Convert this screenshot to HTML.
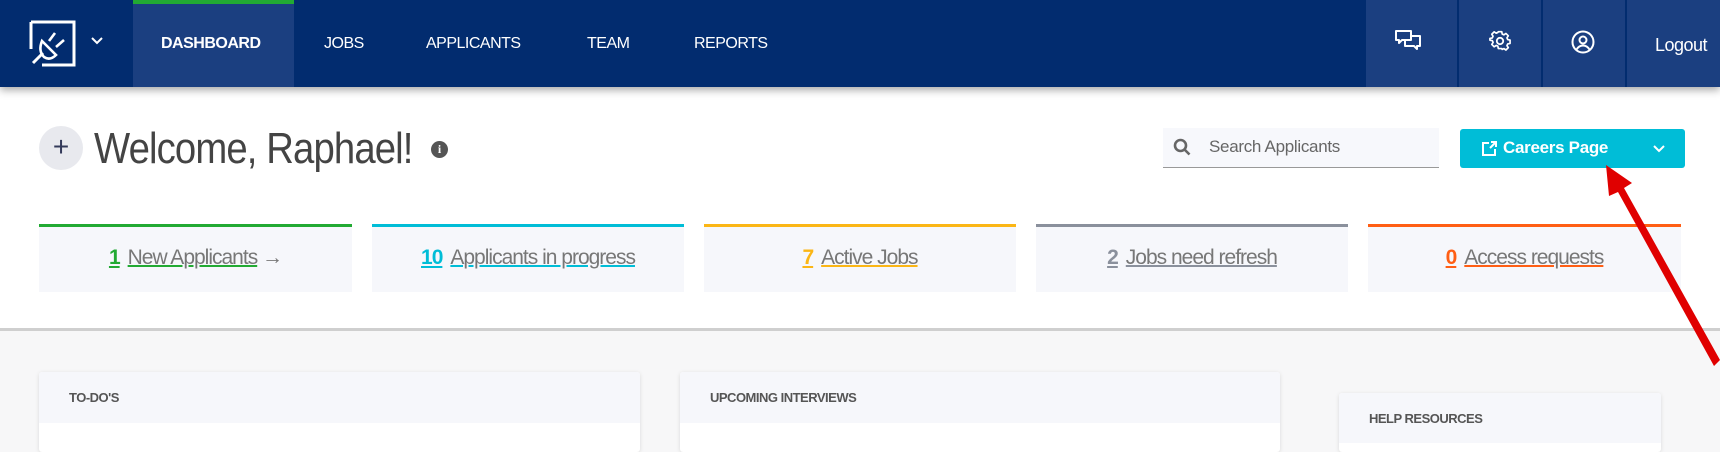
<!DOCTYPE html>
<html style="width:1720px;height:452px;overflow:hidden"><head><meta charset="utf-8"><style>
*{margin:0;padding:0;box-sizing:border-box}
body{width:1720px;height:452px;overflow:hidden;background:#f7f7f8;font-family:"Liberation Sans",sans-serif;position:relative}
.nav{position:absolute;left:0;top:0;width:1720px;height:87px;background:#022c6f;box-shadow:0 3px 8px rgba(0,0,0,.35);z-index:2}
.nav .t{position:absolute;top:35px;color:#fff;font-size:16px;letter-spacing:-0.5px}
.tab{position:absolute;left:133px;top:0;width:161px;height:87px;background:#1b3f80;border-top:4px solid #22aa33}
.rb{position:absolute;top:0;height:87px;background:#1b3f80}
.top{position:absolute;left:0;top:87px;width:1720px;height:244px;background:#fff;border-bottom:3px solid #cfcfcf}
.card{position:absolute;top:224px;height:68px;background:#f6f7fb;border-top:3px solid;text-align:center;font-size:21px;line-height:62px;color:#777;letter-spacing:-1px}
.card b{font-weight:bold;text-decoration:underline;margin-right:8px}
.card span{text-decoration:underline;text-decoration-thickness:2px}
.panel{position:absolute;background:#fff;box-shadow:0 1px 4px rgba(0,0,0,.12);border-radius:3px;overflow:hidden}
.panel .h{background:#f6f7fb;height:51px;padding:18px 30px;font-size:13px;font-weight:bold;color:#555;letter-spacing:-0.5px}
</style></head><body>
<div class="nav">
 <svg style="position:absolute;left:28px;top:19px" width="50" height="50" viewBox="0 0 50 50" fill="none" stroke="#fff" stroke-width="3">
  <path d="M3 3H46V46H14"/><path d="M3 3V30"/>
  <path d="M5 44L15 34"/><path d="M14 22L28 36Q22 42 16 38Q10 32 14 22Z" stroke-width="2.6"/>
  <path d="M21 22L27 14M28 28L36 21" stroke-width="2.6"/>
 </svg>
 <svg style="position:absolute;left:91px;top:37px" width="12" height="8" viewBox="0 0 12 8"><path d="M1 1L6 6L11 1" stroke="#fff" stroke-width="2" fill="none"/></svg>
 <div class="tab"></div>
 <div class="t" style="left:161px;font-weight:bold">DASHBOARD</div>
 <div class="t" style="left:324px">JOBS</div>
 <div class="t" style="left:426px">APPLICANTS</div>
 <div class="t" style="left:587px">TEAM</div>
 <div class="t" style="left:694px">REPORTS</div>
 <div class="rb" style="left:1366px;width:91px"></div>
 <div class="rb" style="left:1459px;width:82px"></div>
 <div class="rb" style="left:1543px;width:82px"></div>
 <div class="rb" style="left:1627px;width:93px"></div>
 <svg style="position:absolute;left:1394px;top:29px" width="28" height="24" viewBox="0 0 28 24" fill="none" stroke="#fff" stroke-width="2" stroke-linejoin="round">
  <path d="M2 2H17V11H8L5 14V11H2Z"/><path d="M17 7H26V17H23V20L20 17H11V11"/>
 </svg>
 <svg style="position:absolute;left:1489px;top:30px" width="22" height="22" viewBox="0 0 24 24" fill="none" stroke="#fff" stroke-width="2"><circle cx="12" cy="12" r="3.5"/><path d="M10 2h4l.6 2.8 2 .9 2.4-1.6 2.8 2.8-1.6 2.4.9 2 2.8.6v4l-2.8.6-.9 2 1.6 2.4-2.8 2.8-2.4-1.6-2 .9L14 22h-4l-.6-2.8-2-.9L5 19.9 2.2 17.1l1.6-2.4-.9-2L0 12V10l2.8-.6.9-2L2.2 5 5 2.2l2.4 1.6 2-.9Z" stroke-linejoin="round" transform="translate(1 0) scale(.92)"/></svg>
 <svg style="position:absolute;left:1571px;top:30px" width="24" height="24" viewBox="0 0 24 24" fill="none" stroke="#fff" stroke-width="2"><circle cx="12" cy="12" r="10.5"/><circle cx="12" cy="10" r="3.5"/><path d="M5.5 19.5Q8 15.5 12 15.5Q16 15.5 18.5 19.5"/></svg>
 <div class="t" style="left:1655px;font-size:18px">Logout</div>
</div>
<div class="top"></div>
<div style="position:absolute;left:39px;top:126px;width:44px;height:44px;border-radius:50%;background:#e8e9ee;color:#333a5a;font-size:28px;text-align:center;line-height:42px">+</div>
<div style="position:absolute;left:94px;top:124px;font-size:44px;color:#444;letter-spacing:-1px;transform:scaleX(0.87);transform-origin:left top;white-space:nowrap">Welcome, Raphael!</div>
<div style="position:absolute;left:431px;top:141px;width:17px;height:17px;border-radius:50%;background:#555;color:#fff;font-size:12px;font-weight:bold;text-align:center;line-height:17px;font-family:'Liberation Serif',serif">i</div>
<div style="position:absolute;left:1163px;top:128px;width:276px;height:40px;background:#f7f8fc;border-bottom:1px solid #999"></div>
<svg style="position:absolute;left:1173px;top:138px" width="18" height="19" viewBox="0 0 18 19" fill="none" stroke="#666" stroke-width="2.6"><circle cx="7.5" cy="7.5" r="5.5"/><path d="M11.5 11.5L16.5 16.5"/></svg>
<div style="position:absolute;left:1209px;top:137px;font-size:17px;color:#666;letter-spacing:-0.3px">Search Applicants</div>
<div style="position:absolute;left:1460px;top:129px;width:225px;height:39px;background:#00bdd7;border-radius:3px"></div>
<svg style="position:absolute;left:1481px;top:140px" width="17" height="17" viewBox="0 0 17 17" fill="none" stroke="#fff" stroke-width="2"><path d="M8 3H2V15H14V9"/><path d="M9 8L15 2M10 2H15V7"/></svg>
<div style="position:absolute;left:1503px;top:138px;font-size:17px;color:#fff;font-weight:bold;letter-spacing:-0.3px">Careers Page</div>
<svg style="position:absolute;left:1653px;top:145px" width="12" height="8" viewBox="0 0 12 8"><path d="M1 1L6 6L11 1" stroke="#fff" stroke-width="2" fill="none"/></svg>
<div class="card" style="left:39px;width:313px;border-color:#22aa33"><b style="color:#22aa33">1</b><span style="text-decoration-color:#22aa33">New Applicants</span> →</div>
<div class="card" style="left:372px;width:312px;border-color:#00bdd7"><b style="color:#00bdd7">10</b><span style="text-decoration-color:#00bdd7">Applicants in progress</span></div>
<div class="card" style="left:704px;width:312px;border-color:#fbb615"><b style="color:#fbb615">7</b><span style="text-decoration-color:#fbb615">Active Jobs</span></div>
<div class="card" style="left:1036px;width:312px;border-color:#8a909c"><b style="color:#8a909c">2</b><span style="text-decoration-color:#8a909c">Jobs need refresh</span></div>
<div class="card" style="left:1368px;width:313px;border-color:#ff5e14"><b style="color:#ff5e14">0</b><span style="text-decoration-color:#ff5e14">Access requests</span></div>
<div class="panel" style="left:39px;top:372px;width:601px;height:80px"><div class="h">TO-DO'S</div></div>
<div class="panel" style="left:680px;top:372px;width:600px;height:80px"><div class="h">UPCOMING INTERVIEWS</div></div>
<div class="panel" style="left:1339px;top:393px;width:322px;height:59px"><div class="h" style="height:50px">HELP RESOURCES</div></div>
<svg style="position:absolute;left:0;top:0" width="1720" height="452"><path d="M1606 165L1632 183L1624 188L1720 360L1714 366L1618 192L1609 196Z" fill="#e00000"/></svg>
</body></html>
